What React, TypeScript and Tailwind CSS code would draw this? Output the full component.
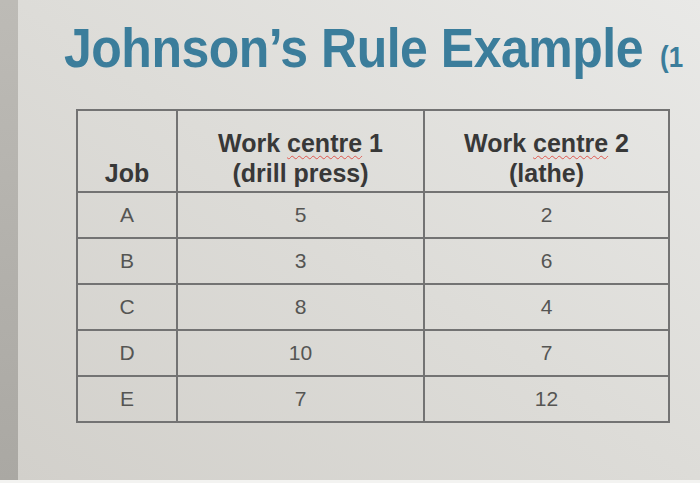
const rows: [string, string, string][] = [
  ['A', '5', '2'],
  ['B', '3', '6'],
  ['C', '8', '4'],
  ['D', '10', '7'],
  ['E', '7', '12'],
];

export default function App() {
  return (
    <div className="flex h-[483px] w-[700px] flex-col overflow-hidden font-['Liberation_Sans',Arial,sans-serif]">
      <div className="flex flex-1">
        {/* bezel strip on the left of the photo */}
        <div className="w-[18px] bg-gradient-to-b from-[#bdbbb6] to-[#aaa8a3]" />

        <div className="flex-1 bg-gradient-to-tr from-[#d2d0cb] via-[#dddcd8] to-[#e9e9e7] pl-[46px] pt-[26px]">
          <h1 className="flex origin-bottom scale-y-[1.12] items-baseline whitespace-nowrap text-[50px] font-bold leading-none tracking-[-0.01em] text-[#3b7d9b]">
            Johnson’s Rule Example
            <span className="ml-[17px] text-[26px] tracking-normal">(1</span>
          </h1>

          <table className="mt-[33px] ml-[12px] border-collapse border-2 border-[#6f6f6f] text-center">
            <thead>
              <tr className="h-[82px] align-bottom text-[25px] font-bold leading-[30px] text-[#383838]">
                <th className="w-[100px] border-2 border-[#737373] pb-[3px] font-bold">Job</th>
                <th className="w-[247px] border-2 border-[#737373] pb-[3px] font-bold">
                  Work <span className="underline decoration-[#e0574f] decoration-wavy decoration-1 underline-offset-[3px]">centre</span> 1
                  <br />
                  (drill press)
                </th>
                <th className="w-[245px] border-2 border-[#737373] pb-[3px] font-bold">
                  Work <span className="underline decoration-[#e0574f] decoration-wavy decoration-1 underline-offset-[3px]">centre</span> 2
                  <br />
                  (lathe)
                </th>
              </tr>
            </thead>
            <tbody>
              {rows.map(([job, a, b]) => (
                <tr key={job} className="h-[46px] text-[21px] text-[#555553]">
                  <td className="border-2 border-[#737373]">{job}</td>
                  <td className="border-2 border-[#737373]">{a}</td>
                  <td className="border-2 border-[#737373]">{b}</td>
                </tr>
              ))}
            </tbody>
          </table>
        </div>
      </div>
      <div className="h-[3px] bg-[#f3f3f1]" />
    </div>
  );
}
